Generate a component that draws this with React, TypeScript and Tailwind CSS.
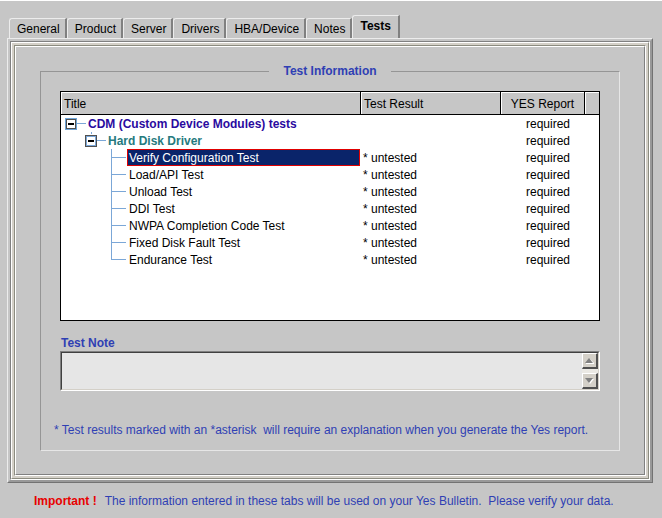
import React from 'react';

const tabs = ['General', 'Product', 'Server', 'Drivers', 'HBA/Device', 'Notes'];

const tests = [
  'Verify Configuration Test',
  'Load/API Test',
  'Unload Test',
  'DDI Test',
  'NWPA Completion Code Test',
  'Fixed Disk Fault Test',
  'Endurance Test',
];

const scrollButton =
  'flex h-4 items-center justify-center border-t border-r-2 border-b-2 border-l border-t-white border-r-[#505050] border-b-[#505050] border-l-white bg-[#d4d0c8]';

function Expander({ label, nested }: { label: string; nested?: boolean }) {
  return (
    <button type="button" aria-label={label} className="shrink-0">
      <svg width="12" height="12" className="block" aria-hidden="true" shapeRendering="crispEdges">
        <rect x="0.5" y="0.5" width="11" height="11" fill="#fff" stroke={nested ? '#505050' : '#6ea5d8'} />
        <rect x="1.5" y="1.5" width="9" height="9" fill="#fff" stroke={nested ? '#7ba7d7' : '#505050'} />
        <rect x="3" y="5" width="6" height="2" fill="#000" />
      </svg>
    </button>
  );
}

function Branch({ last }: { last: boolean }) {
  return (
    <svg width="16" height="17" className="shrink-0" aria-hidden="true" shapeRendering="crispEdges">
      <path d={last ? 'M0.5 0V8.5H15' : 'M0.5 0V17M0 8.5H15'} fill="none" stroke="#7ba7d7" />
    </svg>
  );
}

export default function App() {
  return (
    <main className="flex min-h-screen flex-col border-t border-white bg-[#c6c6c6] font-['Liberation_Sans',Arial,sans-serif] text-[12px] leading-4 text-black">
      <div role="tablist" className="flex items-end px-[9px] pt-3.5">
        {tabs.map((tab) => (
          <button
            key={tab}
            type="button"
            role="tab"
            aria-selected="false"
            className="h-5 shrink-0 rounded-tl-[3px] border-t border-r-2 border-l border-t-[#ececec] border-r-[#808080] border-l-[#ececec] pr-[5px] pl-[7px] whitespace-nowrap"
          >
            {tab}
          </button>
        ))}
        <button
          type="button"
          role="tab"
          aria-selected="true"
          className="-mb-px h-6 shrink-0 rounded-tl-[3px] border-t border-r-2 border-l border-t-[#ececec] border-r-[#808080] border-l-[#ececec] bg-[#c6c6c6] px-[7px] pb-1 font-bold"
        >
          Tests
        </button>
      </div>

      <section className="mr-[9px] ml-[7px] border border-t-[#ececec] border-r-[#737373] border-b-[#737373] border-l-[#ececec]">
        <div className="border-2 border-t-[#c6c6c6] border-r-[#999] border-b-[#999] border-l-[#c6c6c6]">
          <div className="border border-t-[#808080] border-r-white border-b-white border-l-[#808080]">
            <div className="border border-t-white border-r-[#8c8c80] border-b-[#8c8c80] border-l-white">
              <div className="border-2 border-[#d4d0c8]">
                <div className="border border-t-[#8c8c80] border-r-white border-b-white border-l-[#8c8c80]">
                  <div className="border border-t-white border-r-[#808080] border-b-[#808080] border-l-white px-6 pt-4 pb-[23px]">
                    <fieldset className="min-w-0 border border-t-[#959595] border-r-[#e6e6e6] border-b-[#e6e6e6] border-l-[#959595] px-[19px] pb-3">
                      <legend className="mx-auto px-3.5 font-bold text-[#2f3fb4]">Test Information</legend>
                      <div className="mt-3 h-[230px] border border-black bg-white">
                        <table className="w-full table-fixed border-separate border-spacing-0">
                          <colgroup>
                            <col />
                            <col className="w-[140px]" />
                            <col className="w-[84px]" />
                            <col className="w-[14px]" />
                          </colgroup>
                          <thead>
                            <tr className="h-[23px] bg-[#c6c6c6]">
                              <th className="border-r border-b border-black px-[3px] pt-0.5 pb-0 text-left font-normal shadow-[inset_1px_1px_0_#fff]">Title</th>
                              <th className="border-r border-b border-black px-[3px] pt-0.5 pb-0 text-left font-normal shadow-[inset_1px_1px_0_#fff]">Test Result</th>
                              <th className="border-r border-b border-black p-0 pt-0.5 font-normal shadow-[inset_1px_1px_0_#fff]">YES Report</th>
                              <th className="border-b border-black p-0 shadow-[inset_1px_1px_0_#fff]" />
                            </tr>
                          </thead>
                          <tbody>
                            <tr className="h-[17px]">
                              <td className="p-0">
                                <div className="flex h-[17px] items-center pl-1 font-bold text-[#2a0aa0]">
                                  <Expander label="Collapse CDM tests" />
                                  <span className="mr-0.5 h-px w-[9px] bg-[#7ba7d7]" />
                                  CDM (Custom Device Modules) tests
                                </div>
                              </td>
                              <td className="p-0" />
                              <td className="p-0 pl-2.5 text-center">required</td>
                              <td className="p-0" />
                            </tr>
                            <tr className="h-[17px]">
                              <td className="p-0">
                                <div className="relative flex h-[17px] items-center pl-6 font-bold text-[#267a7e]">
                                  <span className="absolute top-0 left-[30px] h-0.5 w-px bg-[#7ba7d7]" />
                                  <Expander label="Collapse Hard Disk Driver" nested />
                                  <span className="mr-0.5 h-px w-[9px] bg-[#7ba7d7]" />
                                  Hard Disk Driver
                                </div>
                              </td>
                              <td className="p-0" />
                              <td className="p-0 pl-2.5 text-center">required</td>
                              <td className="p-0" />
                            </tr>
                            {tests.map((test, i) => (
                              <tr key={test} className="h-[17px]">
                                <td className="p-0">
                                  <div className="flex h-[17px] items-center pl-[50px]">
                                    <Branch last={i === tests.length - 1} />
                                    <span className={i === 0 ? 'mr-px h-[17px] grow border border-[#e00000] bg-[#0a246a] pl-px leading-4 text-white' : 'pl-0.5'}>{test}</span>
                                  </div>
                                </td>
                                <td className="p-0 pl-0.5">* untested</td>
                                <td className="p-0 pl-2.5 text-center">required</td>
                                <td className="p-0" />
                              </tr>
                            ))}
                          </tbody>
                        </table>
                      </div>

                      <label htmlFor="note" className="mt-3.5 block pl-px font-bold text-[#2f3fb4]">Test Note</label>
                      <div className="flex h-10 border border-t-[#808080] border-r-white border-b-white border-l-[#808080]">
                        <div className="flex grow border border-t-[#404040] border-r-[#d4d0c8] border-b-[#d4d0c8] border-l-[#404040] bg-[#e6e6e6]">
                          <textarea id="note" className="block h-9 min-w-0 grow resize-none bg-transparent px-1 outline-none" />
                          <div className="flex w-4 flex-col justify-between bg-[#ebe9e4]">
                            <button type="button" aria-label="Scroll up" className={scrollButton}>
                              <svg width="9" height="6" aria-hidden="true"><path d="M1 5L5 1L9 5V6H1Z" fill="#fff" /><path d="M0 5L4 0L8 5Z" fill="#808080" /></svg>
                            </button>
                            <button type="button" aria-label="Scroll down" className={scrollButton}>
                              <svg width="9" height="6" aria-hidden="true"><path d="M1 1L5 6L9 1Z" fill="#fff" /><path d="M0 0L4 5L8 0Z" fill="#808080" /></svg>
                            </button>
                          </div>
                        </div>
                      </div>
                      <p className="mt-[31px] -ml-1.5 whitespace-pre text-[#2f3fb4]">* Test results marked with an *asterisk  will require an explanation when you generate the Yes report.</p>
                    </fieldset>
                  </div>
                </div>
              </div>
            </div>
          </div>
        </div>
      </section>

      <p className="mt-2.5 pl-[34px] whitespace-pre text-[#2f3fb4]"><strong className="mr-2 text-[#e80000]">Important !</strong>The information entered in these tabs will be used on your Yes Bulletin.  Please verify your data.</p>
    </main>
  );
}
